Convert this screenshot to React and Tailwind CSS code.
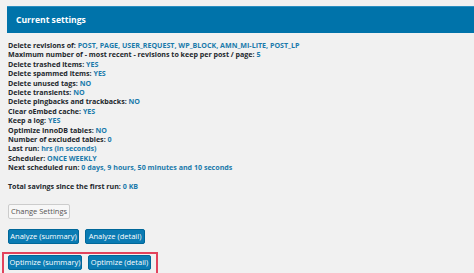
import React from "react";

const rows = [
  ["Delete revisions of:", "POST, PAGE, USER_REQUEST, WP_BLOCK, AMN_MI-LITE, POST_LP"],
  ["Maximum number of - most recent - revisions to keep per post / page:", "5"],
  ["Delete trashed items:", "YES"],
  ["Delete spammed items:", "YES"],
  ["Delete unused tags:", "NO"],
  ["Delete transients:", "NO"],
  ["Delete pingbacks and trackbacks:", "NO"],
  ["Clear oEmbed cache:", "YES"],
  ["Keep a log:", "YES"],
  ["Optimize InnoDB tables:", "NO"],
  ["Number of excluded tables:", "0"],
  ["Last run:", "hrs (in seconds)"],
  ["Scheduler:", "ONCE WEEKLY"],
  ["Next scheduled run:", "0 days, 9 hours, 50 minutes and 10 seconds"],
];

const Row = ({ label, value }) => (
  <div className="h-[9.4px] leading-[9.4px] whitespace-nowrap">
    <span className="text-[#23282d]">{label}</span>{" "}
    <span className="text-[#1a7aab]">{value}</span>
  </div>
);

const BlueBtn = ({ children, w }) => (
  <button className={`h-[15px] ${w} rounded-[2px] bg-[#0a7bb3] border border-[#006799] text-white text-[7.5px] leading-none`}>
    {children}
  </button>
);

export default function App() {
  return (
    <div
      className="w-[474px] h-[273px] overflow-hidden bg-[#f1f1f1] pt-[6px]"
      style={{ fontFamily: "'Open Sans', 'Liberation Sans', sans-serif" }}
    >
      {/* header */}
      <div className="ml-[7px] h-[27px] bg-[#0073aa] border-t border-[#2a8ec0] flex items-center pl-[9px]">
        <span className="text-white font-bold text-[8.6px]">Current settings</span>
      </div>

      {/* settings list */}
      <div className="pl-[8px] pt-[8px] font-bold text-[7.1px]">
        {rows.map(([l, v]) => (
          <Row key={l} label={l} value={v} />
        ))}
        <div className="h-[9.4px]" />
        <Row label="Total savings since the first run:" value="0 KB" />
      </div>

      {/* buttons */}
      <div className="pl-[8px] pt-[13px] flex">
        <button className="h-[15px] w-[62px] rounded-[2px] bg-[#f7f7f7] border border-[#cccccc] text-[#555] text-[7.5px] leading-none">
          Change Settings
        </button>
      </div>
      <div className="pl-[8px] pt-[10px] flex gap-[6px]">
        <BlueBtn w="w-[71px]">Analyze (summary)</BlueBtn>
        <BlueBtn w="w-[60px]">Analyze (detail)</BlueBtn>
      </div>
      <div className="ml-[2px] mt-[8px] w-[156px] h-[30px] border-2 border-[#e2435c] pl-[4px] pt-[1px] flex gap-[6px] items-start">
        <BlueBtn w="w-[74px]">Optimize (summary)</BlueBtn>
        <BlueBtn w="w-[63px]">Optimize (detail)</BlueBtn>
      </div>
    </div>
  );
}
